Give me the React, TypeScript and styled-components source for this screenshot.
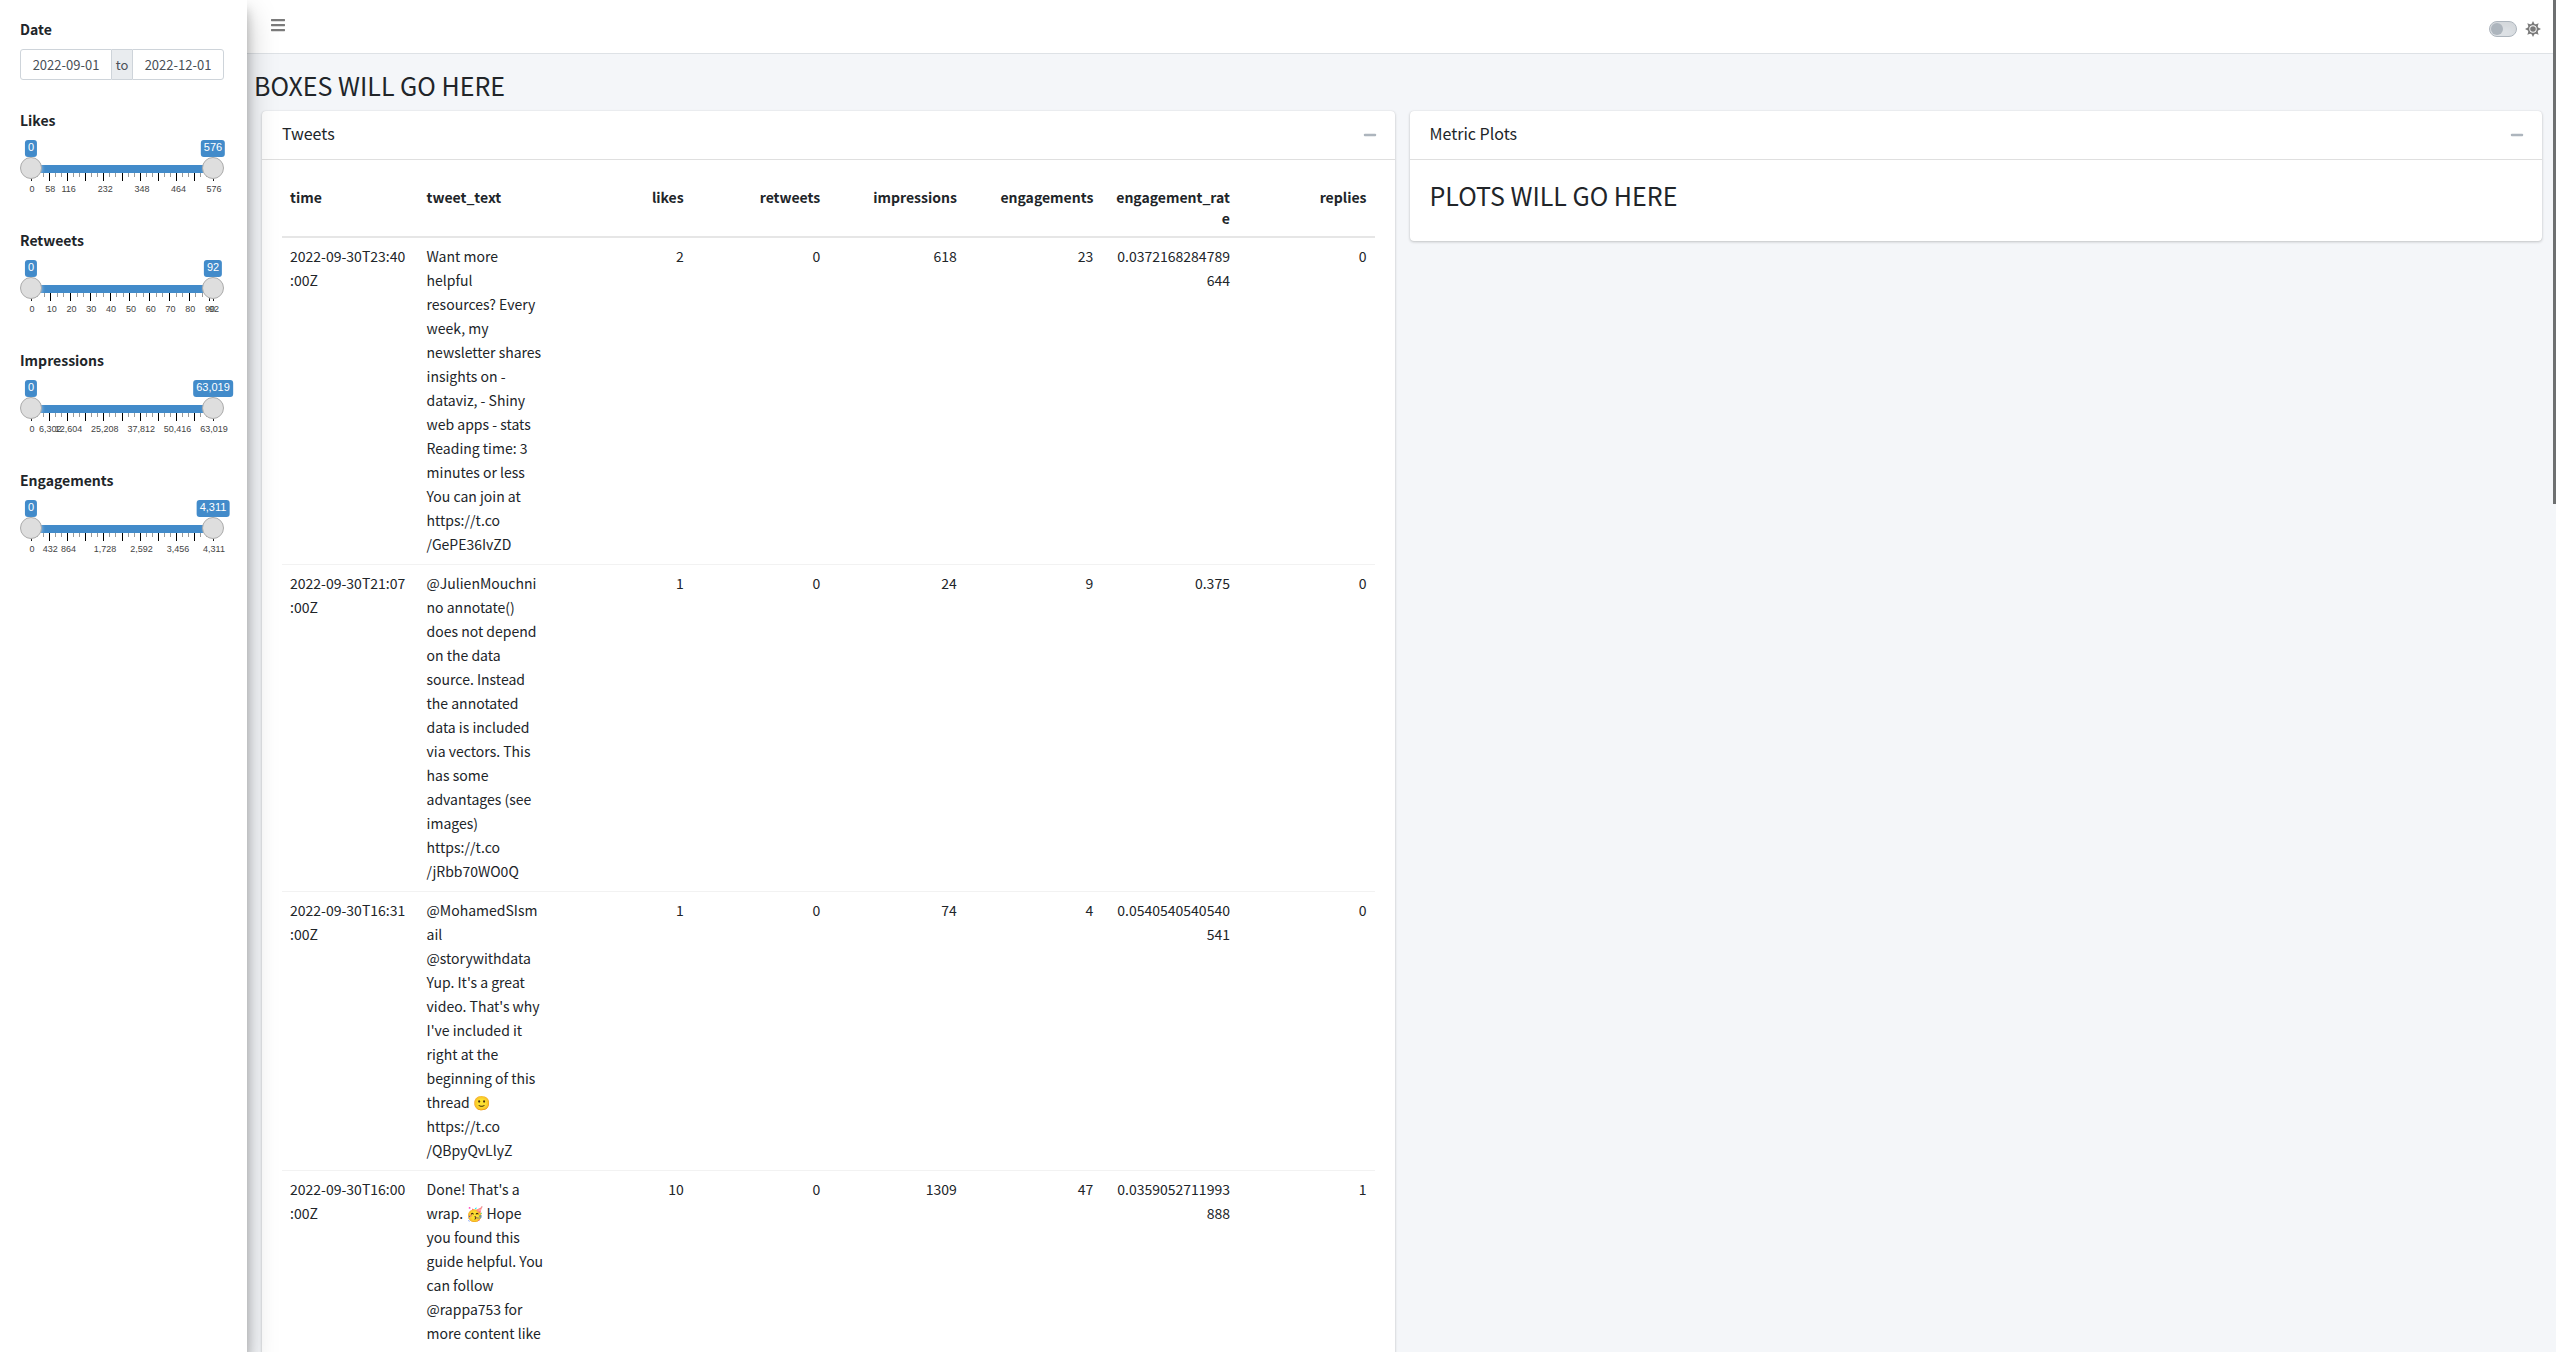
import React, { useId, useState } from "react";
import styled, { createGlobalStyle } from "styled-components";
import { FaBars, FaMinus } from "react-icons/fa";

const sans = `"Noto Sans CJK SC", "Noto Sans", sans-serif`;
const arial = `"Liberation Sans", Arial, sans-serif`;

const GlobalStyle = createGlobalStyle`
  *, *::before, *::after { box-sizing: border-box; }
  html, body { height: 100%; overflow: hidden; }
  body {
    margin: 0;
    background: #f4f6f9;
    color: #212529;
    font-family: ${sans};
    font-size: 14px;
    line-height: 24px;
  }
  #root { height: 100%; }
  h3, h4, p { margin: 0; font-weight: 400; }
`;

const Shell = styled.div`
  display: grid;
  grid-template-columns: 247px minmax(0, 1fr);
  height: 100vh;
`;

const Sidebar = styled.aside`
  position: relative;
  z-index: 2;
  display: flex;
  flex-direction: column;
  gap: 28px;
  padding: 17px 23px 0 20px;
  background: #fff;
  box-shadow: 0 14px 28px rgba(0, 0, 0, 0.25), 0 10px 10px rgba(0, 0, 0, 0.22);
`;

const Group = styled.div`
  display: flex;
  flex-direction: column;
  gap: 8px;
`;

const GroupLabel = styled.label`
  font-weight: 700;
`;

const DateRow = styled.div`
  display: flex;
  height: 31px;
`;

const DateInput = styled.input<{ $side: "left" | "right" }>`
  flex: 1;
  min-width: 0;
  padding: 0;
  border: 1px solid #ced4da;
  border-radius: ${(p) => (p.$side === "left" ? "3px 0 0 3px" : "0 3px 3px 0")};
  background: #fff;
  color: #495057;
  font-family: ${sans};
  font-size: 13px;
  text-align: center;
`;

const DateAddon = styled.span`
  display: flex;
  align-items: center;
  justify-content: center;
  width: 20px;
  background: #e9ecef;
  border: solid #ced4da;
  border-width: 1px 0;
  color: #495057;
  font-size: 13px;
`;

const SliderBox = styled.div`
  position: relative;
  height: 60px;
  font-family: ${arial};
`;

const Track = styled.div`
  position: absolute;
  top: 25px;
  left: 11px;
  right: 11px;
  height: 8px;
  background: #428bca;
`;

const Range = styled.input`
  position: absolute;
  top: 17px;
  left: 0;
  width: 100%;
  height: 22px;
  margin: 0;
  appearance: none;
  background: transparent;
  pointer-events: none;
  &::-webkit-slider-thumb {
    appearance: none;
    width: 22px;
    height: 22px;
    border: 1px solid #ababab;
    border-radius: 50%;
    background: #dedede;
    box-shadow: 1px 1px 3px rgba(255, 255, 255, 0.3);
    pointer-events: auto;
    cursor: pointer;
  }
`;

const Scale = styled.div`
  position: absolute;
  top: 0;
  left: 11px;
  right: 11px;
  height: 100%;
`;

const Bubble = styled.output`
  position: absolute;
  top: 0;
  padding: 0 3px 2px;
  border-radius: 3px;
  background: #428bca;
  color: #fff;
  font-size: 11px;
  line-height: 15px;
  transform: translateX(-50%);
`;

const Ticks = styled.svg`
  position: absolute;
  top: 33px;
  left: 0;
  width: 100%;
  height: 8px;
  overflow: visible;
`;

const TickLabel = styled.span`
  position: absolute;
  top: 43px;
  padding-left: 2px;
  color: #444;
  font-size: 9px;
  line-height: 12px;
  white-space: nowrap;
  transform: translateX(-50%);
`;

const Main = styled.div`
  display: flex;
  flex-direction: column;
  min-width: 0;
  height: 100vh;
`;

const TopBar = styled.header`
  display: flex;
  align-items: center;
  justify-content: space-between;
  flex: none;
  height: 54px;
  padding: 0 15px 0 23px;
  background: #fff;
  border-bottom: 1px solid #dee2e6;
`;

const IconButton = styled.button`
  display: flex;
  padding: 0;
  border: 0;
  background: none;
  color: ${(p) => p.color};
  cursor: pointer;
`;

const MenuButton = styled(IconButton)`
  padding-bottom: 4px;
`;

const ThemeSwitch = styled.div`
  display: flex;
  align-items: center;
  gap: 8px;
  padding-top: 5px;
`;

const Switch = styled.input`
  appearance: none;
  width: 28px;
  height: 16px;
  margin: 0;
  padding: 1px;
  border: 1px solid #adb5bd;
  border-radius: 8px;
  background: #dee2e6;
  box-shadow: inset 0 4px 8px rgba(0, 0, 0, 0.06);
  cursor: pointer;
  &::before {
    content: "";
    display: block;
    width: 12px;
    height: 12px;
    border-radius: 50%;
    background: #adb5bd;
  }
  &:checked::before { margin-left: 12px; }
`;

const Content = styled.main`
  flex: 1;
  min-height: 0;
  padding: 16px 14px 0 15px;
  overflow: hidden;
`;

const Heading = styled.h3`
  font-size: 25px;
  line-height: 31px;
  margin-bottom: 10px;
`;

const PageHeading = styled(Heading)`
  margin-left: -8px;
`;

const Columns = styled.div`
  display: grid;
  grid-template-columns: repeat(2, minmax(0, 1fr));
  align-items: start;
  gap: 15px;
`;

const CardBox = styled.section`
  border-radius: 4px;
  background: #fff;
  box-shadow: 0 0 1px rgba(0, 0, 0, 0.13), 0 1px 3px rgba(0, 0, 0, 0.2);
`;

const CardHeader = styled.div`
  display: flex;
  align-items: center;
  justify-content: space-between;
  height: 49px;
  padding: 0 18px 0 20px;
  border-bottom: 1px solid #dfdfdf;
`;

const CardTitle = styled.h4`
  padding-bottom: 4px;
  font-size: 16px;
`;

const CardBody = styled.div`
  padding: 20px;
`;

const TweetTable = styled.table`
  width: 100%;
  table-layout: fixed;
  border-collapse: separate;
  border-spacing: 0;
`;

const HeadCell = styled.th<{ $num?: boolean }>`
  padding: 7px 8px;
  border-bottom: 2px solid #e6e6e6;
  line-height: 21px;
  text-align: ${(p) => (p.$num ? "right" : "left")};
  vertical-align: top;
  overflow-wrap: anywhere;
`;

const Cell = styled.td<{ $num?: boolean }>`
  padding: 6px 8px 8px;
  border-top: 1px solid #f2f2f2;
  text-align: ${(p) => (p.$num ? "right" : "left")};
  vertical-align: top;
  overflow-wrap: anywhere;
  white-space: pre-line;
  tbody tr:first-child & { border-top: 0; }
`;

const ScrollThumb = styled.div`
  position: fixed;
  z-index: 3;
  top: 0;
  right: 0;
  width: 3px;
  height: 504px;
  background: #6e7071;
`;

type SliderProps = { label: string; max: number; step: number; shown: number[] };

const format = (n: number) => n.toLocaleString("en-US");

function RangeSlider({ label, max, step, shown }: SliderProps) {
  const id = useId();
  const [low, setLow] = useState(0);
  const [high, setHigh] = useState(max);
  const at = (n: number) => `${(n / max) * 100}%`;
  const majors: number[] = [];
  for (let n = 0; n < max - step / 20; n += step) majors.push(n);
  const minors = majors
    .flatMap((n) => [n + step / 3, n + (step * 2) / 3])
    .filter((n) => n < max);
  majors.push(max);
  return (
    <Group>
      <GroupLabel htmlFor={id}>{label}</GroupLabel>
      <SliderBox>
        <Track />
        <Scale>
          <Ticks aria-hidden="true" shapeRendering="crispEdges">
            {minors.map((n) => (
              <line key={n} x1={at(n)} x2={at(n)} y1="0" y2="4" stroke="#999" />
            ))}
            {majors.map((n) => (
              <line key={n} x1={at(n)} x2={at(n)} y1="0" y2="8" stroke="#000" />
            ))}
          </Ticks>
          {shown.map((n) => (
            <TickLabel key={n} style={{ left: at(n) }}>
              {format(n)}
            </TickLabel>
          ))}
          <Bubble style={{ left: at(low) }}>{format(low)}</Bubble>
          <Bubble style={{ left: at(high) }}>{format(high)}</Bubble>
        </Scale>
        <Range
          id={id}
          type="range"
          min={0}
          max={max}
          value={low}
          onChange={(e) => setLow(Math.min(+e.target.value, high))}
        />
        <Range
          type="range"
          aria-label={`${label} maximum`}
          min={0}
          max={max}
          value={high}
          onChange={(e) => setHigh(Math.max(+e.target.value, low))}
        />
      </SliderBox>
    </Group>
  );
}

const sliders: SliderProps[] = [
  { label: "Likes", max: 576, step: 57.6, shown: [0, 58, 116, 232, 348, 464, 576] },
  { label: "Retweets", max: 92, step: 10, shown: [0, 10, 20, 30, 40, 50, 60, 70, 80, 90, 92] },
  { label: "Impressions", max: 63019, step: 6301.9, shown: [0, 6302, 12604, 25208, 37812, 50416, 63019] },
  { label: "Engagements", max: 4311, step: 431.1, shown: [0, 432, 864, 1728, 2592, 3456, 4311] },
];

const columns = ["time", "tweet_text", "likes", "retweets", "impressions", "engagements", "engagement_rate", "replies"];

const tweets: string[][] = [
  [
    "2022-09-30T23:40\n:00Z",
    "Want more\nhelpful\nresources? Every\nweek, my\nnewsletter shares\ninsights on -\ndataviz, - Shiny\nweb apps - stats\nReading time: 3\nminutes or less\nYou can join at\nhttps://t.co\n/GePE36IvZD",
    "2", "0", "618", "23", "0.0372168284789\n644", "0",
  ],
  [
    "2022-09-30T21:07\n:00Z",
    "@JulienMouchni\nno annotate()\ndoes not depend\non the data\nsource. Instead\nthe annotated\ndata is included\nvia vectors. This\nhas some\nadvantages (see\nimages)\nhttps://t.co\n/jRbb70WO0Q",
    "1", "0", "24", "9", "0.375", "0",
  ],
  [
    "2022-09-30T16:31\n:00Z",
    "@MohamedSIsm\nail\n@storywithdata\nYup. It's a great\nvideo. That's why\nI've included it\nright at the\nbeginning of this\nthread 🙂\nhttps://t.co\n/QBpyQvLlyZ",
    "1", "0", "74", "4", "0.0540540540540\n541", "0",
  ],
  [
    "2022-09-30T16:00\n:00Z",
    "Done! That's a\nwrap. 🥳 Hope\nyou found this\nguide helpful. You\ncan follow\n@rappa753 for\nmore content like",
    "10", "0", "1309", "47", "0.0359052711993\n888", "1",
  ],
];

function SunIcon() {
  const rays = [0, 45, 90, 135, 180, 225, 270, 315];
  return (
    <svg width="16" height="16" viewBox="0 0 16 16" fill="#7b7b7b" aria-hidden="true">
      {rays.map((a) => (
        <polygon key={a} points="8,0 9.9,3.8 6.1,3.8" transform={`rotate(${a} 8 8)`} />
      ))}
      <circle cx="8" cy="8" r="4.5" fill="none" stroke="#7b7b7b" strokeWidth="1.6" />
      <circle cx="8" cy="8" r="2.8" />
    </svg>
  );
}

function Card({ title, children }: { title: string; children: React.ReactNode }) {
  const [open, setOpen] = useState(true);
  return (
    <CardBox>
      <CardHeader>
        <CardTitle>{title}</CardTitle>
        <IconButton color="#adb5bd" aria-label={`Collapse ${title}`} onClick={() => setOpen(!open)}>
          <FaMinus size={14} />
        </IconButton>
      </CardHeader>
      {open && <CardBody>{children}</CardBody>}
    </CardBox>
  );
}

export default function App() {
  return (
    <>
      <GlobalStyle />
      <Shell>
        <Sidebar>
          <Group>
            <GroupLabel htmlFor="date-from">Date</GroupLabel>
            <DateRow>
              <DateInput $side="left" id="date-from" defaultValue="2022-09-01" />
              <DateAddon>to</DateAddon>
              <DateInput $side="right" aria-label="Date to" defaultValue="2022-12-01" />
            </DateRow>
          </Group>
          {sliders.map((s) => (
            <RangeSlider key={s.label} {...s} />
          ))}
        </Sidebar>
        <Main>
          <TopBar>
            <MenuButton color="#7b7b7b" aria-label="Toggle sidebar">
              <FaBars size={16} />
            </MenuButton>
            <ThemeSwitch>
              <Switch type="checkbox" aria-label="Dark mode" />
              <SunIcon />
            </ThemeSwitch>
          </TopBar>
          <Content>
            <PageHeading>BOXES WILL GO HERE</PageHeading>
            <Columns>
              <Card title="Tweets">
                <TweetTable>
                  <thead>
                    <tr>
                      {columns.map((c, i) => (
                        <HeadCell key={c} $num={i > 1} scope="col">
                          {c === "engagement_rate" ? (
                            <>
                              engagement_rat
                              <br />e
                            </>
                          ) : (
                            c
                          )}
                        </HeadCell>
                      ))}
                    </tr>
                  </thead>
                  <tbody>
                    {tweets.map((row) => (
                      <tr key={row[0]}>
                        {row.map((value, i) => (
                          <Cell key={columns[i]} $num={i > 1}>
                            {value}
                          </Cell>
                        ))}
                      </tr>
                    ))}
                  </tbody>
                </TweetTable>
              </Card>
              <Card title="Metric Plots">
                <Heading>PLOTS WILL GO HERE</Heading>
              </Card>
            </Columns>
          </Content>
        </Main>
      </Shell>
      <ScrollThumb />
    </>
  );
}
